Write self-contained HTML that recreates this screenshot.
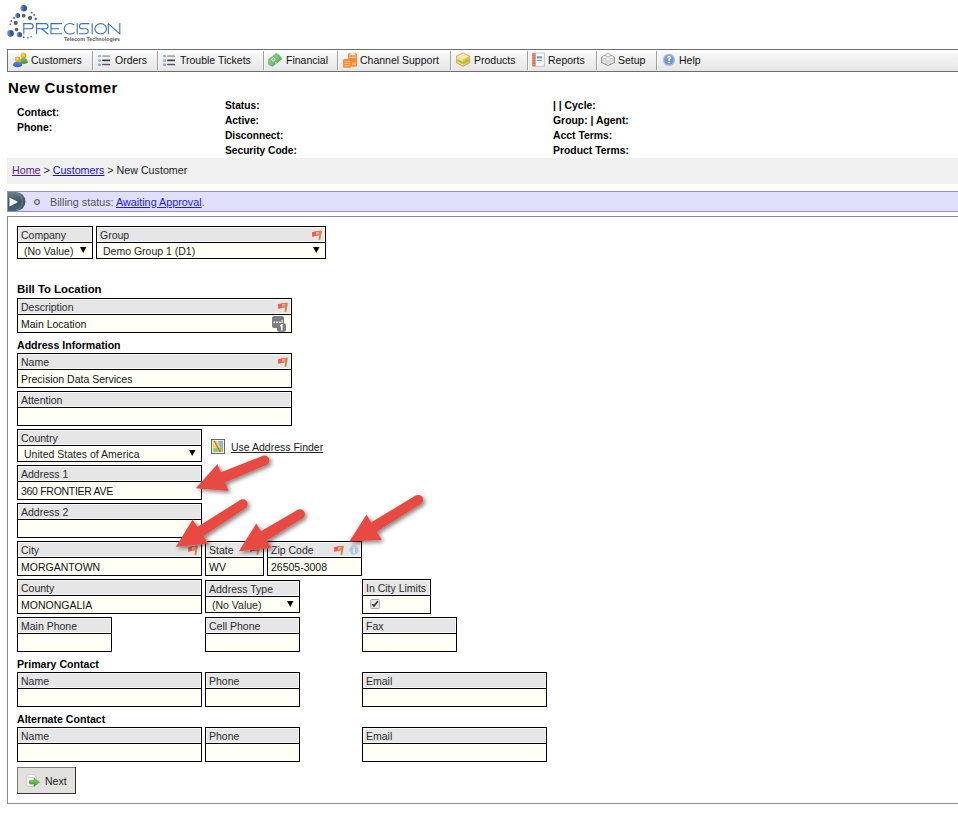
<!DOCTYPE html><html><head><meta charset="utf-8"><style>
html,body{margin:0;padding:0;background:#fff;width:958px;height:816px;overflow:hidden;position:relative}
.t{position:absolute;white-space:nowrap;font-family:'Liberation Sans', sans-serif}
.r{position:absolute;display:block}
a{color:inherit}
</style></head><body>
<svg class="r" style="left:0;top:0" width="130" height="45" viewBox="0 0 130 45">
<defs><linearGradient id="bd" x1="0" y1="0" x2="1" y2="0"><stop offset="0" stop-color="#8a9ccc"/><stop offset="0.5" stop-color="#3a64a8"/><stop offset="1" stop-color="#1c4888"/></linearGradient></defs>
<circle cx="23.7" cy="8.3" r="3.3" fill="url(#bd)"/>
<circle cx="17.65" cy="15.4" r="2.5" fill="url(#bd)"/>
<circle cx="23.7" cy="15.7" r="1.9" fill="#5e5e5e"/>
<circle cx="30.1" cy="17.9" r="2.1" fill="#5e5e5e"/>
<circle cx="31.7" cy="12.7" r="0.9" fill="#3e64a0"/>
<circle cx="34.2" cy="14.9" r="0.9" fill="#3e64a0"/>
<circle cx="35.7" cy="19" r="1.2" fill="#3e64a0"/>
<circle cx="14.1" cy="17.9" r="1" fill="#3e64a0"/>
<circle cx="11.3" cy="21" r="0.9" fill="#3e64a0"/>
<circle cx="10.2" cy="24.3" r="0.75" fill="#3e64a0"/>
<circle cx="15.7" cy="22.9" r="2.1" fill="#5e5e5e"/>
<circle cx="16.5" cy="29.5" r="1.8" fill="#5e5e5e"/>
<circle cx="10.5" cy="33.4" r="3.3" fill="url(#bd)"/>
<circle cx="19.3" cy="34.7" r="2.6" fill="url(#bd)"/>
<circle cx="23.7" cy="37.2" r="0.9" fill="#3e64a0"/>
<circle cx="27.9" cy="37.9" r="0.8" fill="#3e64a0"/>
<circle cx="31.2" cy="36.8" r="0.8" fill="#3e64a0"/>
<g fill="none" stroke="#3872b0" stroke-width="1.1">
<path d="M23.8 34.2 V23.6 H30.5 A2.6 2.6 0 0 1 30.5 28.8 H23.8"/>
<path d="M36.6 34.2 V23.6 H45.4 A2.6 2.6 0 0 1 45.4 28.8 H36.6 M41.5 28.8 L48.3 34.2"/>
<path d="M62 23.6 H51 V33.7 H62 M51 28.7 H59"/>
<path d="M74.5 25.2 A5.9 5.3 0 1 0 74.5 32.3"/>
<path d="M77.2 23.3 V34.2"/>
<path d="M89.3 23.6 H82.1 A2.6 2.6 0 0 0 82.1 28.8 H86.4 A2.55 2.55 0 0 1 86.4 33.7 H79"/>
<path d="M92.2 23.3 V34.2"/>
<ellipse cx="100.7" cy="28.7" rx="5.8" ry="5.1"/>
<path d="M108.3 34.2 V23.6 L119.8 33.8 V23.3"/>
</g>
<text x="64" y="40.5" font-family="Liberation Sans" font-size="5.4" font-weight="bold" fill="#5a5a5a" textLength="56" lengthAdjust="spacingAndGlyphs">Telecom Technologies</text>
</svg>
<div class="r" style="left:7px;top:49px;width:951px;height:23px;background:#6e6e6e"></div>
<div class="r" style="left:8px;top:50px;width:950px;height:21px;background:linear-gradient(#ffffff,#f4f4f4 30%,#e6e6e6);"></div>
<div class="r" style="left:92px;top:51px;width:1px;height:19px;background:#a0a0a0"></div>
<div class="r" style="left:93px;top:51px;width:1px;height:19px;background:#fbfbfb"></div>
<div class="r" style="left:157px;top:51px;width:1px;height:19px;background:#a0a0a0"></div>
<div class="r" style="left:158px;top:51px;width:1px;height:19px;background:#fbfbfb"></div>
<div class="r" style="left:263px;top:51px;width:1px;height:19px;background:#a0a0a0"></div>
<div class="r" style="left:264px;top:51px;width:1px;height:19px;background:#fbfbfb"></div>
<div class="r" style="left:337px;top:51px;width:1px;height:19px;background:#a0a0a0"></div>
<div class="r" style="left:338px;top:51px;width:1px;height:19px;background:#fbfbfb"></div>
<div class="r" style="left:450px;top:51px;width:1px;height:19px;background:#a0a0a0"></div>
<div class="r" style="left:451px;top:51px;width:1px;height:19px;background:#fbfbfb"></div>
<div class="r" style="left:527px;top:51px;width:1px;height:19px;background:#a0a0a0"></div>
<div class="r" style="left:528px;top:51px;width:1px;height:19px;background:#fbfbfb"></div>
<div class="r" style="left:596px;top:51px;width:1px;height:19px;background:#a0a0a0"></div>
<div class="r" style="left:597px;top:51px;width:1px;height:19px;background:#fbfbfb"></div>
<div class="r" style="left:656px;top:51px;width:1px;height:19px;background:#a0a0a0"></div>
<div class="r" style="left:657px;top:51px;width:1px;height:19px;background:#fbfbfb"></div>
<div class="t" style="left:31px;top:55px;font-size:10.5px;line-height:10.5px;font-weight:normal;color:#111;">Customers</div>
<div class="t" style="left:115px;top:55px;font-size:10.5px;line-height:10.5px;font-weight:normal;color:#111;">Orders</div>
<div class="t" style="left:180px;top:55px;font-size:10.5px;line-height:10.5px;font-weight:normal;color:#111;">Trouble Tickets</div>
<div class="t" style="left:286px;top:55px;font-size:10.5px;line-height:10.5px;font-weight:normal;color:#111;">Financial</div>
<div class="t" style="left:360px;top:55px;font-size:10.5px;line-height:10.5px;font-weight:normal;color:#111;">Channel Support</div>
<div class="t" style="left:474px;top:55px;font-size:10.5px;line-height:10.5px;font-weight:normal;color:#111;">Products</div>
<div class="t" style="left:548px;top:55px;font-size:10.5px;line-height:10.5px;font-weight:normal;color:#111;">Reports</div>
<div class="t" style="left:618px;top:55px;font-size:10.5px;line-height:10.5px;font-weight:normal;color:#111;">Setup</div>
<div class="t" style="left:679px;top:55px;font-size:10.5px;line-height:10.5px;font-weight:normal;color:#111;">Help</div>
<svg class="r" style="left:13px;top:52px" width="16" height="16" viewBox="0 0 16 16"><defs><radialGradient id="hd" cx="0.4" cy="0.4" r="0.6"><stop offset="0" stop-color="#f8e070"/><stop offset="1" stop-color="#d09a10"/></radialGradient>
<linearGradient id="bl" x1="0" y1="0" x2="0" y2="1"><stop offset="0" stop-color="#5a90e0"/><stop offset="1" stop-color="#2a5cc0"/></linearGradient>
<linearGradient id="gr" x1="0" y1="0" x2="0" y2="1"><stop offset="0" stop-color="#8cc060"/><stop offset="1" stop-color="#4a8a30"/></linearGradient></defs>
<path d="M7.3 10.8 Q7 5.8 10.5 5.8 Q14.6 5.8 14.8 10.8 Q12.5 12.3 9.8 11.8 Z" fill="url(#gr)"/>
<circle cx="10.4" cy="3.6" r="2.8" fill="url(#hd)"/>
<path d="M0 13.5 Q0 9.5 4.5 9.5 Q9.3 9.5 9.3 13.5 Q7 15.3 4.5 15.2 Q1.5 15 0 13.5 Z" fill="url(#bl)"/>
<circle cx="4.7" cy="7.2" r="2.8" fill="url(#hd)"/></svg>
<svg class="r" style="left:98px;top:52px" width="16" height="16" viewBox="0 0 16 16"><rect x="0" y="3" width="3" height="2.2" rx="0.8" fill="#8fb4ec"/><rect x="0" y="7.3" width="3" height="2.4" rx="1" fill="#8fb4ec"/><rect x="0" y="11.5" width="3" height="2.5" rx="1" fill="#80a8e8"/>
<rect x="4.2" y="3.2" width="7.8" height="1.7" rx="0.5" fill="#a8a8a8"/><rect x="4.2" y="7.6" width="7.8" height="1.6" rx="0.5" fill="#444"/><rect x="4.2" y="11.7" width="7.8" height="1.6" rx="0.5" fill="#5a5a5a"/></svg>
<svg class="r" style="left:163px;top:52px" width="16" height="16" viewBox="0 0 16 16"><rect x="0" y="3" width="3" height="2.2" rx="0.8" fill="#8fb4ec"/><rect x="0" y="7.3" width="3" height="2.4" rx="1" fill="#8fb4ec"/><rect x="0" y="11.5" width="3" height="2.5" rx="1" fill="#80a8e8"/>
<rect x="4.2" y="3.2" width="7.8" height="1.7" rx="0.5" fill="#a8a8a8"/><rect x="4.2" y="7.6" width="7.8" height="1.6" rx="0.5" fill="#444"/><rect x="4.2" y="11.7" width="7.8" height="1.6" rx="0.5" fill="#5a5a5a"/></svg>
<svg class="r" style="left:268px;top:52px" width="16" height="16" viewBox="0 0 16 16"><g transform="rotate(-38 7 8)"><rect x="0.5" y="5.8" width="13" height="6" rx="0.5" fill="#6cb86a"/><rect x="-0.5" y="3.5" width="13" height="6.2" rx="0.5" fill="#7cc67a" stroke="#5aa858" stroke-width="0.5"/><circle cx="6" cy="6.6" r="1.5" fill="none" stroke="#d8f0d0" stroke-width="0.9"/><circle cx="6" cy="10.8" r="0.9" fill="#cfeccc"/></g></svg>
<svg class="r" style="left:343px;top:52px" width="16" height="16" viewBox="0 0 16 16"><g fill="#fa8c35"><rect x="5" y="1" width="9" height="13.8" rx="1.5"/><rect x="0" y="7" width="8.5" height="8.7" rx="1.5"/></g>
<ellipse cx="9.5" cy="2.2" rx="3" ry="0.9" fill="#fff"/>
<g stroke="#fdd2b0" stroke-width="0.7"><path d="M6 4 H13 M6 5.5 H13 M9 11 H13 M9 12.5 H13 M1.5 9.5 H7 M1.5 11.5 H7 M1.5 13.5 H7"/></g></svg>
<svg class="r" style="left:456px;top:52px" width="16" height="16" viewBox="0 0 16 16"><path d="M7 1 L13.8 4.2 V10.6 L7 14.3 L0.2 10.6 V4.2 Z" fill="#f0c860" stroke="#d0a040" stroke-width="0.8"/>
<path d="M1 4.5 L7 1.6 L13 4.5 L7 7.5 Z" fill="#f8e8b8"/><path d="M7 7.5 L13 4.5 V10 L7 13 Z" fill="#f2bc40"/><path d="M1 4.5 L7 7.5 V13 L1 10 Z" fill="#f8dca0"/>
<path d="M1 8.2 L7 11 L13 8" stroke="#9ccc40" stroke-width="2" fill="none"/></svg>
<svg class="r" style="left:532px;top:52px" width="16" height="16" viewBox="0 0 16 16"><rect x="3" y="1" width="9.3" height="13.3" fill="#fcfcfc" stroke="#c0c0c0" stroke-width="0.9"/><rect x="0.3" y="0.8" width="3.2" height="13.8" rx="1" fill="#d0703a"/>
<path d="M1 2.5 H3 M1 5 H3 M1 7.5 H3 M1 10 H3 M1 12.5 H3" stroke="#f0b890" stroke-width="0.5"/>
<rect x="4.6" y="4.2" width="5.6" height="2.4" rx="0.8" fill="#6898e0"/><rect x="4.6" y="7.9" width="5.6" height="1.1" rx="0.5" fill="#6898e0"/></svg>
<svg class="r" style="left:601px;top:52px" width="16" height="16" viewBox="0 0 16 16"><path d="M7 2 L13.5 5 V10.5 L7 13.5 L0.5 10.5 V5 Z" fill="#dcdcdc" stroke="#949494" stroke-width="1"/>
<path d="M0.5 5 L7 8 L13.5 5" stroke="#b8b8b8" stroke-width="0.8" fill="none"/><path d="M7 8 V13.5" stroke="#c8c8c8" stroke-width="0.6"/>
<ellipse cx="7" cy="3" rx="2.6" ry="1.4" fill="#fafafa" stroke="#a0a0a0" stroke-width="0.7"/><ellipse cx="3.5" cy="5" rx="1.8" ry="0.9" fill="#fafafa"/><ellipse cx="10.5" cy="5" rx="1.8" ry="0.9" fill="#fafafa"/><ellipse cx="7" cy="7" rx="1.8" ry="0.9" fill="#fafafa"/></svg>
<svg class="r" style="left:663px;top:52px" width="16" height="16" viewBox="0 0 16 16"><circle cx="6" cy="7.9" r="6.1" fill="#a4bde0"/><circle cx="6" cy="7.9" r="4.7" fill="#7199cc"/>
<path d="M4 6 Q4.2 4 6.1 4 Q8.2 4 8.2 5.8 Q8.2 7 6.8 7.6 L6.6 9.1 H5.4 L5.4 7.1 Q6.8 6.6 6.7 5.8 Q6.6 5.2 6 5.2 Q5.4 5.2 5.3 6.2 Z" fill="#fff"/><rect x="5.3" y="9.9" width="1.5" height="1.2" fill="#fff"/></svg>
<div class="t" style="left:8px;top:80px;font-size:15px;line-height:15px;font-weight:bold;color:#000;letter-spacing:0.4px">New Customer</div>
<div class="t" style="left:17px;top:108px;font-size:10.4px;line-height:10.4px;font-weight:bold;color:#000;">Contact:</div>
<div class="t" style="left:17px;top:123px;font-size:10.4px;line-height:10.4px;font-weight:bold;color:#000;">Phone:</div>
<div class="t" style="left:225px;top:101px;font-size:10.2px;line-height:10.2px;font-weight:bold;color:#000;">Status:</div>
<div class="t" style="left:225px;top:116px;font-size:10.2px;line-height:10.2px;font-weight:bold;color:#000;">Active:</div>
<div class="t" style="left:225px;top:131px;font-size:10.2px;line-height:10.2px;font-weight:bold;color:#000;">Disconnect:</div>
<div class="t" style="left:225px;top:146px;font-size:10.2px;line-height:10.2px;font-weight:bold;color:#000;">Security Code:</div>
<div class="t" style="left:553px;top:101px;font-size:10.4px;line-height:10.4px;font-weight:bold;color:#000;">| | Cycle:</div>
<div class="t" style="left:553px;top:116px;font-size:10.4px;line-height:10.4px;font-weight:bold;color:#000;">Group: | Agent:</div>
<div class="t" style="left:553px;top:131px;font-size:10.4px;line-height:10.4px;font-weight:bold;color:#000;">Acct Terms:</div>
<div class="t" style="left:553px;top:146px;font-size:10.4px;line-height:10.4px;font-weight:bold;color:#000;">Product Terms:</div>
<div class="r" style="left:7px;top:158px;width:951px;height:26px;background:#f0f0f0"></div>
<div class="t" style="left:12px;top:165px;font-size:10.7px;line-height:10.7px;font-weight:normal;color:#222;"><span style="color:#551a8b;text-decoration:underline">Home</span> &gt; <span style="color:#1a0dcc;text-decoration:underline">Customers</span> &gt; New Customer</div>
<div class="r" style="left:7px;top:191px;width:951px;height:21px;background:#8f8fc8"></div>
<div class="r" style="left:8px;top:192px;width:950px;height:19px;background:#e0e0fd"></div>
<svg class="r" style="left:8px;top:192px" width="19" height="19" viewBox="0 0 19 19">
<defs><linearGradient id="pg" x1="0" y1="0" x2="0" y2="1"><stop offset="0" stop-color="#6a7f88"/><stop offset="0.5" stop-color="#3e5866"/><stop offset="1" stop-color="#48646f"/></linearGradient></defs>
<path d="M0 0 H8 A9.5 9.5 0 0 1 8 19 H0 Z" fill="url(#pg)"/>
<path d="M8 1.2 A8.6 8.6 0 0 1 8 17.8" fill="none" stroke="#6d8c98" stroke-width="0.8"/>
<path d="M1.5 5.5 L10 10 L1.5 14.5 Z" fill="#fff"/>
</svg>
<svg class="r" style="left:34px;top:199px" width="7" height="7"><circle cx="3" cy="3" r="2.3" fill="none" stroke="#666" stroke-width="1.3"/></svg>
<div class="t" style="left:50px;top:197px;font-size:10.8px;line-height:10.8px;font-weight:normal;color:#555;">Billing status: <span style="color:#1a1ae0;text-decoration:underline">Awaiting Approval</span>.</div>
<div class="r" style="left:7px;top:216px;width:951px;height:588px;background:#8a8a8a"></div>
<div class="r" style="left:8px;top:217px;width:950px;height:586px;background:#fff"></div>
<div class="r" style="left:17px;top:226px;width:76px;height:33px;background:#000"></div>
<div class="r" style="left:18px;top:227px;width:74px;height:15px;background:#e6e6e6;box-shadow:inset 0 0 0 1px #f6f6f6"></div>
<div class="r" style="left:18px;top:243px;width:74px;height:15px;background:#fffff5"></div>
<div class="t" style="left:21px;top:230px;font-size:10.5px;line-height:10.5px;font-weight:normal;color:#2a2a2a;">Company</div>
<div class="t" style="left:24px;top:246px;font-size:10.5px;line-height:10.5px;font-weight:normal;color:#222;">(No Value)</div>
<svg class="r" style="left:80px;top:247px" width="7" height="6"><path d="M0 0 H6.5 L3.25 6 Z" fill="#000"/></svg>
<div class="r" style="left:96px;top:226px;width:230px;height:33px;background:#000"></div>
<div class="r" style="left:97px;top:227px;width:228px;height:15px;background:#e6e6e6;box-shadow:inset 0 0 0 1px #f6f6f6"></div>
<div class="r" style="left:97px;top:243px;width:228px;height:15px;background:#fffff5"></div>
<div class="t" style="left:100px;top:230px;font-size:10.5px;line-height:10.5px;font-weight:normal;color:#2a2a2a;">Group</div>
<div class="t" style="left:103px;top:246px;font-size:10.5px;line-height:10.5px;font-weight:normal;color:#222;">Demo Group 1 (D1)</div>
<svg class="r" style="left:313px;top:247px" width="7" height="6"><path d="M0 0 H6.5 L3.25 6 Z" fill="#000"/></svg>
<svg class="r" style="left:312px;top:230px" width="11" height="10" viewBox="0 0 11 10">
<path d="M0 2.2 Q3.5 0.9 7.9 0.9 L7.5 5.6 Q3.8 5.3 0.2 7.1 Z" fill="#f25c52"/>
<path d="M4.2 2.1 L6.9 1.9 L6.6 4.6 L4 4.8 Z" fill="#f9aaa2"/>
<path d="M7.8 0.5 L9.9 0.9 L8.3 10 L6.5 9.7 Z" fill="#c28f40"/>
</svg>
<div class="t" style="left:17px;top:284px;font-size:11.4px;line-height:11.4px;font-weight:bold;color:#000;">Bill To Location</div>
<div class="r" style="left:17px;top:298px;width:275px;height:35px;background:#000"></div>
<div class="r" style="left:18px;top:299px;width:273px;height:15px;background:#e6e6e6;box-shadow:inset 0 0 0 1px #f6f6f6"></div>
<div class="r" style="left:18px;top:315px;width:273px;height:17px;background:#fffff5"></div>
<div class="t" style="left:21px;top:302px;font-size:10.5px;line-height:10.5px;font-weight:normal;color:#2a2a2a;">Description</div>
<div class="t" style="left:21px;top:319px;font-size:10.5px;line-height:10.5px;font-weight:normal;color:#111;">Main Location</div>
<svg class="r" style="left:278px;top:302px" width="11" height="10" viewBox="0 0 11 10">
<path d="M0 2.2 Q3.5 0.9 7.9 0.9 L7.5 5.6 Q3.8 5.3 0.2 7.1 Z" fill="#f25c52"/>
<path d="M4.2 2.1 L6.9 1.9 L6.6 4.6 L4 4.8 Z" fill="#f9aaa2"/>
<path d="M7.8 0.5 L9.9 0.9 L8.3 10 L6.5 9.7 Z" fill="#c28f40"/>
</svg>
<div class="t" style="left:17px;top:340px;font-size:10.6px;line-height:10.6px;font-weight:bold;color:#000;">Address Information</div>
<div class="r" style="left:17px;top:353px;width:275px;height:35px;background:#000"></div>
<div class="r" style="left:18px;top:354px;width:273px;height:15px;background:#e6e6e6;box-shadow:inset 0 0 0 1px #f6f6f6"></div>
<div class="r" style="left:18px;top:370px;width:273px;height:17px;background:#fffff5"></div>
<div class="t" style="left:21px;top:357px;font-size:10.5px;line-height:10.5px;font-weight:normal;color:#2a2a2a;">Name</div>
<div class="t" style="left:21px;top:374px;font-size:10.5px;line-height:10.5px;font-weight:normal;color:#111;">Precision Data Services</div>
<svg class="r" style="left:278px;top:357px" width="11" height="10" viewBox="0 0 11 10">
<path d="M0 2.2 Q3.5 0.9 7.9 0.9 L7.5 5.6 Q3.8 5.3 0.2 7.1 Z" fill="#f25c52"/>
<path d="M4.2 2.1 L6.9 1.9 L6.6 4.6 L4 4.8 Z" fill="#f9aaa2"/>
<path d="M7.8 0.5 L9.9 0.9 L8.3 10 L6.5 9.7 Z" fill="#c28f40"/>
</svg>
<div class="r" style="left:17px;top:391px;width:275px;height:35px;background:#000"></div>
<div class="r" style="left:18px;top:392px;width:273px;height:15px;background:#e6e6e6;box-shadow:inset 0 0 0 1px #f6f6f6"></div>
<div class="r" style="left:18px;top:408px;width:273px;height:17px;background:#fffff5"></div>
<div class="t" style="left:21px;top:395px;font-size:10.5px;line-height:10.5px;font-weight:normal;color:#2a2a2a;">Attention</div>
<div class="r" style="left:17px;top:429px;width:185px;height:33px;background:#000"></div>
<div class="r" style="left:18px;top:430px;width:183px;height:15px;background:#e6e6e6;box-shadow:inset 0 0 0 1px #f6f6f6"></div>
<div class="r" style="left:18px;top:446px;width:183px;height:15px;background:#fffff5"></div>
<div class="t" style="left:21px;top:433px;font-size:10.5px;line-height:10.5px;font-weight:normal;color:#2a2a2a;">Country</div>
<div class="t" style="left:24px;top:449px;font-size:10.5px;line-height:10.5px;font-weight:normal;color:#222;">United States of America</div>
<svg class="r" style="left:189px;top:450px" width="7" height="6"><path d="M0 0 H6.5 L3.25 6 Z" fill="#000"/></svg>
<div class="r" style="left:17px;top:465px;width:185px;height:35px;background:#000"></div>
<div class="r" style="left:18px;top:466px;width:183px;height:15px;background:#e6e6e6;box-shadow:inset 0 0 0 1px #f6f6f6"></div>
<div class="r" style="left:18px;top:482px;width:183px;height:17px;background:#fffff5"></div>
<div class="t" style="left:21px;top:469px;font-size:10.5px;line-height:10.5px;font-weight:normal;color:#2a2a2a;">Address 1</div>
<div class="t" style="left:21px;top:486px;font-size:10.5px;line-height:10.5px;font-weight:normal;color:#111;letter-spacing:-0.3px">360 FRONTIER AVE</div>
<div class="r" style="left:17px;top:503px;width:185px;height:35px;background:#000"></div>
<div class="r" style="left:18px;top:504px;width:183px;height:15px;background:#e6e6e6;box-shadow:inset 0 0 0 1px #f6f6f6"></div>
<div class="r" style="left:18px;top:520px;width:183px;height:17px;background:#fffff5"></div>
<div class="t" style="left:21px;top:507px;font-size:10.5px;line-height:10.5px;font-weight:normal;color:#2a2a2a;">Address 2</div>
<div class="r" style="left:17px;top:541px;width:185px;height:35px;background:#000"></div>
<div class="r" style="left:18px;top:542px;width:183px;height:15px;background:#e6e6e6;box-shadow:inset 0 0 0 1px #f6f6f6"></div>
<div class="r" style="left:18px;top:558px;width:183px;height:17px;background:#fffff5"></div>
<div class="t" style="left:21px;top:545px;font-size:10.5px;line-height:10.5px;font-weight:normal;color:#2a2a2a;">City</div>
<div class="t" style="left:21px;top:562px;font-size:10.5px;line-height:10.5px;font-weight:normal;color:#111;">MORGANTOWN</div>
<svg class="r" style="left:188px;top:545px" width="11" height="10" viewBox="0 0 11 10">
<path d="M0 2.2 Q3.5 0.9 7.9 0.9 L7.5 5.6 Q3.8 5.3 0.2 7.1 Z" fill="#f25c52"/>
<path d="M4.2 2.1 L6.9 1.9 L6.6 4.6 L4 4.8 Z" fill="#f9aaa2"/>
<path d="M7.8 0.5 L9.9 0.9 L8.3 10 L6.5 9.7 Z" fill="#c28f40"/>
</svg>
<div class="r" style="left:205px;top:541px;width:59px;height:35px;background:#000"></div>
<div class="r" style="left:206px;top:542px;width:57px;height:15px;background:#e6e6e6;box-shadow:inset 0 0 0 1px #f6f6f6"></div>
<div class="r" style="left:206px;top:558px;width:57px;height:17px;background:#fffff5"></div>
<div class="t" style="left:209px;top:545px;font-size:10.5px;line-height:10.5px;font-weight:normal;color:#2a2a2a;">State</div>
<div class="t" style="left:209px;top:562px;font-size:10.5px;line-height:10.5px;font-weight:normal;color:#111;">WV</div>
<svg class="r" style="left:250px;top:545px" width="11" height="10" viewBox="0 0 11 10">
<path d="M0 2.2 Q3.5 0.9 7.9 0.9 L7.5 5.6 Q3.8 5.3 0.2 7.1 Z" fill="#f25c52"/>
<path d="M4.2 2.1 L6.9 1.9 L6.6 4.6 L4 4.8 Z" fill="#f9aaa2"/>
<path d="M7.8 0.5 L9.9 0.9 L8.3 10 L6.5 9.7 Z" fill="#c28f40"/>
</svg>
<div class="r" style="left:267px;top:541px;width:95px;height:35px;background:#000"></div>
<div class="r" style="left:268px;top:542px;width:93px;height:15px;background:#e6e6e6;box-shadow:inset 0 0 0 1px #f6f6f6"></div>
<div class="r" style="left:268px;top:558px;width:93px;height:17px;background:#fffff5"></div>
<div class="t" style="left:271px;top:545px;font-size:10.5px;line-height:10.5px;font-weight:normal;color:#2a2a2a;">Zip Code</div>
<div class="t" style="left:271px;top:562px;font-size:10.5px;line-height:10.5px;font-weight:normal;color:#111;">26505-3008</div>
<svg class="r" style="left:334px;top:545px" width="11" height="10" viewBox="0 0 11 10">
<path d="M0 2.2 Q3.5 0.9 7.9 0.9 L7.5 5.6 Q3.8 5.3 0.2 7.1 Z" fill="#f25c52"/>
<path d="M4.2 2.1 L6.9 1.9 L6.6 4.6 L4 4.8 Z" fill="#f9aaa2"/>
<path d="M7.8 0.5 L9.9 0.9 L8.3 10 L6.5 9.7 Z" fill="#c28f40"/>
</svg>
<svg class="r" style="left:349px;top:545px" width="10" height="10"><circle cx="5" cy="5" r="4.5" fill="#a9c1e3"/><circle cx="5" cy="5" r="3.6" fill="none" stroke="#c8d8ee" stroke-width="0.6"/><rect x="4.4" y="4" width="1.3" height="3.8" fill="#fff"/><rect x="4.4" y="2.2" width="1.3" height="1.2" fill="#fff"/></svg>
<div class="r" style="left:17px;top:579px;width:185px;height:35px;background:#000"></div>
<div class="r" style="left:18px;top:580px;width:183px;height:15px;background:#e6e6e6;box-shadow:inset 0 0 0 1px #f6f6f6"></div>
<div class="r" style="left:18px;top:596px;width:183px;height:17px;background:#fffff5"></div>
<div class="t" style="left:21px;top:583px;font-size:10.5px;line-height:10.5px;font-weight:normal;color:#2a2a2a;">County</div>
<div class="t" style="left:21px;top:600px;font-size:10.5px;line-height:10.5px;font-weight:normal;color:#111;">MONONGALIA</div>
<div class="r" style="left:205px;top:580px;width:95px;height:33px;background:#000"></div>
<div class="r" style="left:206px;top:581px;width:93px;height:15px;background:#e6e6e6;box-shadow:inset 0 0 0 1px #f6f6f6"></div>
<div class="r" style="left:206px;top:597px;width:93px;height:15px;background:#fffff5"></div>
<div class="t" style="left:209px;top:584px;font-size:10.5px;line-height:10.5px;font-weight:normal;color:#2a2a2a;">Address Type</div>
<div class="t" style="left:212px;top:600px;font-size:10.5px;line-height:10.5px;font-weight:normal;color:#222;">(No Value)</div>
<svg class="r" style="left:287px;top:601px" width="7" height="6"><path d="M0 0 H6.5 L3.25 6 Z" fill="#000"/></svg>
<div class="r" style="left:362px;top:579px;width:69px;height:35px;background:#000"></div>
<div class="r" style="left:363px;top:580px;width:67px;height:15px;background:#e6e6e6;box-shadow:inset 0 0 0 1px #f6f6f6"></div>
<div class="r" style="left:363px;top:596px;width:67px;height:17px;background:#fffff5"></div>
<div class="t" style="left:366px;top:583px;font-size:10.5px;line-height:10.5px;font-weight:normal;color:#2a2a2a;">In City Limits</div>
<div class="r" style="left:17px;top:617px;width:95px;height:35px;background:#000"></div>
<div class="r" style="left:18px;top:618px;width:93px;height:15px;background:#e6e6e6;box-shadow:inset 0 0 0 1px #f6f6f6"></div>
<div class="r" style="left:18px;top:634px;width:93px;height:17px;background:#fffff5"></div>
<div class="t" style="left:21px;top:621px;font-size:10.5px;line-height:10.5px;font-weight:normal;color:#2a2a2a;">Main Phone</div>
<div class="r" style="left:205px;top:617px;width:95px;height:35px;background:#000"></div>
<div class="r" style="left:206px;top:618px;width:93px;height:15px;background:#e6e6e6;box-shadow:inset 0 0 0 1px #f6f6f6"></div>
<div class="r" style="left:206px;top:634px;width:93px;height:17px;background:#fffff5"></div>
<div class="t" style="left:209px;top:621px;font-size:10.5px;line-height:10.5px;font-weight:normal;color:#2a2a2a;">Cell Phone</div>
<div class="r" style="left:362px;top:617px;width:95px;height:35px;background:#000"></div>
<div class="r" style="left:363px;top:618px;width:93px;height:15px;background:#e6e6e6;box-shadow:inset 0 0 0 1px #f6f6f6"></div>
<div class="r" style="left:363px;top:634px;width:93px;height:17px;background:#fffff5"></div>
<div class="t" style="left:366px;top:621px;font-size:10.5px;line-height:10.5px;font-weight:normal;color:#2a2a2a;">Fax</div>
<div class="t" style="left:17px;top:659px;font-size:10.6px;line-height:10.6px;font-weight:bold;color:#000;">Primary Contact</div>
<div class="r" style="left:17px;top:672px;width:185px;height:35px;background:#000"></div>
<div class="r" style="left:18px;top:673px;width:183px;height:15px;background:#e6e6e6;box-shadow:inset 0 0 0 1px #f6f6f6"></div>
<div class="r" style="left:18px;top:689px;width:183px;height:17px;background:#fffff5"></div>
<div class="t" style="left:21px;top:676px;font-size:10.5px;line-height:10.5px;font-weight:normal;color:#2a2a2a;">Name</div>
<div class="r" style="left:205px;top:672px;width:95px;height:35px;background:#000"></div>
<div class="r" style="left:206px;top:673px;width:93px;height:15px;background:#e6e6e6;box-shadow:inset 0 0 0 1px #f6f6f6"></div>
<div class="r" style="left:206px;top:689px;width:93px;height:17px;background:#fffff5"></div>
<div class="t" style="left:209px;top:676px;font-size:10.5px;line-height:10.5px;font-weight:normal;color:#2a2a2a;">Phone</div>
<div class="r" style="left:362px;top:672px;width:185px;height:35px;background:#000"></div>
<div class="r" style="left:363px;top:673px;width:183px;height:15px;background:#e6e6e6;box-shadow:inset 0 0 0 1px #f6f6f6"></div>
<div class="r" style="left:363px;top:689px;width:183px;height:17px;background:#fffff5"></div>
<div class="t" style="left:366px;top:676px;font-size:10.5px;line-height:10.5px;font-weight:normal;color:#2a2a2a;">Email</div>
<div class="t" style="left:17px;top:714px;font-size:10.6px;line-height:10.6px;font-weight:bold;color:#000;">Alternate Contact</div>
<div class="r" style="left:17px;top:727px;width:185px;height:35px;background:#000"></div>
<div class="r" style="left:18px;top:728px;width:183px;height:15px;background:#e6e6e6;box-shadow:inset 0 0 0 1px #f6f6f6"></div>
<div class="r" style="left:18px;top:744px;width:183px;height:17px;background:#fffff5"></div>
<div class="t" style="left:21px;top:731px;font-size:10.5px;line-height:10.5px;font-weight:normal;color:#2a2a2a;">Name</div>
<div class="r" style="left:205px;top:727px;width:95px;height:35px;background:#000"></div>
<div class="r" style="left:206px;top:728px;width:93px;height:15px;background:#e6e6e6;box-shadow:inset 0 0 0 1px #f6f6f6"></div>
<div class="r" style="left:206px;top:744px;width:93px;height:17px;background:#fffff5"></div>
<div class="t" style="left:209px;top:731px;font-size:10.5px;line-height:10.5px;font-weight:normal;color:#2a2a2a;">Phone</div>
<div class="r" style="left:362px;top:727px;width:185px;height:35px;background:#000"></div>
<div class="r" style="left:363px;top:728px;width:183px;height:15px;background:#e6e6e6;box-shadow:inset 0 0 0 1px #f6f6f6"></div>
<div class="r" style="left:363px;top:744px;width:183px;height:17px;background:#fffff5"></div>
<div class="t" style="left:366px;top:731px;font-size:10.5px;line-height:10.5px;font-weight:normal;color:#2a2a2a;">Email</div>
<svg class="r" style="left:272px;top:316px" width="14" height="16" viewBox="0 0 14 16">
<rect x="0" y="0" width="12" height="12" rx="2" fill="#7d7d7d"/>
<rect x="1.5" y="5.5" width="1.6" height="1.6" fill="#fff"/><rect x="4.2" y="5.5" width="1.6" height="1.6" fill="#fff"/><rect x="7" y="5.5" width="1.6" height="1.6" fill="#fff"/><rect x="9.6" y="4" width="1" height="3" fill="#fff"/>
<rect x="5" y="7.3" width="9" height="8.4" rx="2" fill="#7d7d7d"/>
<path d="M8.3 10.2 L9.8 9 V14.2" stroke="#fff" stroke-width="1.5" fill="none"/>
</svg>
<svg class="r" style="left:211px;top:439px" width="14" height="15" viewBox="0 0 14 15">
<rect x="0.5" y="0.5" width="13" height="14" fill="#eef6e8" stroke="#5f6b5f" stroke-width="1"/>
<path d="M2 2 H7 L9 9 L2 10 Z" fill="#e6df70"/><path d="M7 2 H12 V8 L9 9 Z" fill="#8cb2e2"/><path d="M2 9.5 L9 8.5 L12 8 V13 H2 Z" fill="#92cc72"/>
<path d="M3.3 2 L9.3 13" stroke="#e8603e" stroke-width="1.4" fill="none"/><path d="M8.5 10.8 Q10.3 9 12 8.8" stroke="#f09040" stroke-width="1.3" fill="none"/>
</svg>
<div class="t" style="left:231px;top:442px;font-size:10.5px;line-height:10.5px;font-weight:normal;color:#222;"><span style="text-decoration:underline">Use Address Finder</span></div>
<svg class="r" style="left:370px;top:599px" width="10" height="10" viewBox="0 0 10 10"><rect x="0.5" y="0.5" width="9" height="9" rx="1.2" fill="#e6e6e6" stroke="#aaa"/><path d="M2.2 5 L4 7 L7.8 2.3" stroke="#333" stroke-width="1.6" fill="none"/></svg>
<div class="r" style="left:17px;top:767px;width:59px;height:27px;background:#333"></div>
<div class="r" style="left:17px;top:767px;width:58px;height:26px;background:#7a7a7a"></div>
<div class="r" style="left:18px;top:768px;width:57px;height:25px;background:#e3e1de"></div>
<svg class="r" style="left:26px;top:774px" width="14" height="13" viewBox="0 0 14 13">
<defs><linearGradient id="ng" x1="0" y1="0" x2="0" y2="1"><stop offset="0" stop-color="#9ad870"/><stop offset="1" stop-color="#3e9a2a"/></linearGradient></defs>
<path d="M0.5 2 V10.5 Q0.5 12.5 5.2 12.5 Q10 12.5 10 10.5 V2 Z" fill="#f6f6f6" stroke="#c4c4c4" stroke-width="0.8"/>
<ellipse cx="5.2" cy="2" rx="4.7" ry="1.6" fill="#fff" stroke="#c4c4c4" stroke-width="0.8"/>
<path d="M3.5 6.5 H8 V4 L13.5 8.2 L8 12.5 V10 H3.5 Z" fill="url(#ng)" stroke="#3a8a28" stroke-width="0.5"/>
</svg>
<div class="t" style="left:45px;top:776px;font-size:10.5px;line-height:10.5px;font-weight:normal;color:#222;">Next</div>
<svg class="r" style="left:0;top:0" width="958" height="816" viewBox="0 0 958 816"><defs><filter id="sh" x="-20%" y="-20%" width="140%" height="140%"><feGaussianBlur in="SourceAlpha" stdDeviation="1.9"/><feOffset dx="1.8" dy="2.4" result="b"/><feComponentTransfer><feFuncA type="linear" slope="0.5"/></feComponentTransfer><feMerge><feMergeNode/><feMergeNode in="SourceGraphic"/></feMerge></filter></defs><g filter="url(#sh)" fill="#e84a40"><circle cx="264.5" cy="460.5" r="4.9"/><path d="M262.66 455.96 L211.44 476.02 L215.65 486.41 L266.34 465.04 Z"/><path d="M195.8 488.3 L217.5 463.9 L228.7 490.9 Z"/></g><g filter="url(#sh)" fill="#e84a40"><circle cx="242.8" cy="504.1" r="4.9"/><path d="M240.16 499.97 L188.87 532.24 L194.90 541.67 L245.44 508.23 Z"/><path d="M175.8 546.9 L192.6 519.6 L208.5 543.6 Z"/></g><g filter="url(#sh)" fill="#e84a40"><circle cx="300" cy="514.1" r="4.9"/><path d="M297.46 509.91 L252.21 536.34 L258.02 545.91 L302.54 518.29 Z"/><path d="M238.9 551.2 L256.3 523.5 L271.4 547.9 Z"/></g><g filter="url(#sh)" fill="#e84a40"><circle cx="418.2" cy="499.8" r="4.9"/><path d="M415.66 495.61 L362.52 527.45 L368.32 537.03 L420.74 503.99 Z"/><path d="M349.3 541.6 L366.5 514.4 L381.7 540.0 Z"/></g></svg>
</body></html>
